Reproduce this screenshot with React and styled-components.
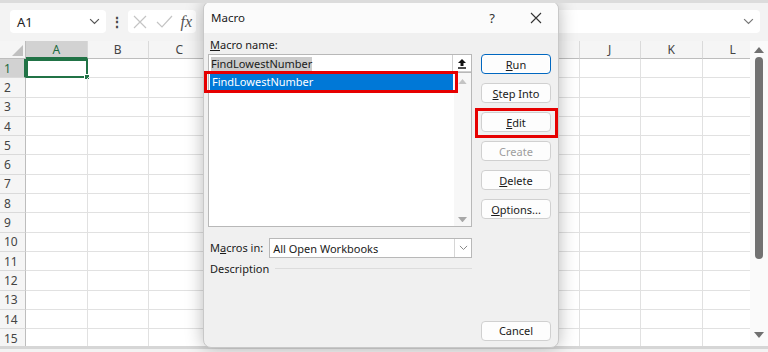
import styled, { createGlobalStyle } from 'styled-components';

const Global = createGlobalStyle`
  html, body {
    margin: 0;
    padding: 0;
    background: #e9e9e9;
  }
  * { box-sizing: border-box; }
`;

const Screen = styled.div`
  position: relative;
  width: 768px;
  height: 352px;
  overflow: hidden;
  background: #f3f3f3;
  border-top: 3px solid #dcdcdc;
  font-family: 'Noto Sans', 'Open Sans', sans-serif;
`;

const FormulaBar = styled.div`
  display: flex;
  align-items: center;
  height: 38px;
  padding: 7px 8px 8px 10px;
`;

const NameBox = styled.div`
  display: flex;
  align-items: center;
  justify-content: space-between;
  width: 96px;
  height: 23px;
  padding: 0 6px 0 7px;
  background: #fff;
  border-radius: 4px;
  font-size: 13px;
  color: #222;
`;

const Dots = styled.div`
  width: 22px;
  text-align: center;
  font-size: 14px;
  font-weight: 700;
  color: #444;
`;

const FxBox = styled.div`
  display: flex;
  align-items: center;
  justify-content: space-between;
  width: 68px;
  height: 23px;
  padding: 0 4px 0 4px;
  background: #fff;
  border-radius: 4px;
`;

const Fx = styled.span`
  font-family: 'Liberation Serif', serif;
  font-style: italic;
  font-size: 16px;
  color: #555;
`;

const FormulaInput = styled.div`
  flex: 1;
  display: flex;
  align-items: center;
  justify-content: flex-end;
  height: 23px;
  margin-left: 9px;
  padding-right: 6px;
  background: #fff;
  border-radius: 4px;
`;

const SheetArea = styled.div`
  display: flex;
  height: 308px;
  border-bottom: 3px solid #d6d6d6;
`;

const Sheet = styled.div`
  flex: 1;
  overflow: hidden;
  display: grid;
  grid-template-columns: 26px repeat(12, 61.5px);
  grid-template-rows: 18px repeat(15, 19.3px);
  background: #fff;
`;

const Cell = styled.div`
  position: relative;
  border-right: 1px solid #e1e1e1;
  border-bottom: 1px solid #e1e1e1;
  ${(p) => p.$active && `
    border: 2px solid #217346;
  `}
`;

const Handle = styled.span`
  position: absolute;
  right: -4px;
  bottom: -4px;
  width: 6px;
  height: 6px;
  background: #217346;
  border: 1px solid #fff;
`;

const Header = styled.div`
  display: flex;
  align-items: center;
  justify-content: ${(p) => (p.$row ? 'flex-start' : 'center')};
  padding-left: ${(p) => (p.$row ? '4px' : '0')};
  font-size: 12px;
  color: ${(p) => (p.$on ? '#1e6b40' : '#444')};
  background: ${(p) => (p.$on ? '#d2d2d2' : '#f5f5f5')};
  border-right: 1px solid ${(p) => (p.$row ? '#bdbdbd' : '#dadada')};
  border-bottom: 1px solid ${(p) => (p.$row ? '#dadada' : '#bdbdbd')};
  ${(p) => p.$on && p.$row && 'border-right: 2px solid #217346;'}
  ${(p) => p.$on && !p.$row && 'border-bottom: 2px solid #217346;'}
`;

const Corner = styled.div`
  display: flex;
  align-items: flex-end;
  justify-content: flex-end;
  padding: 0 2px 2px 0;
  background: #f5f5f5;
  border-right: 1px solid #bdbdbd;
  border-bottom: 1px solid #bdbdbd;
`;

const VScroll = styled.div`
  width: 18px;
  display: flex;
  flex-direction: column;
  align-items: center;
  padding: 6px 0 8px;
  background: #fafafa;
`;

const Thumb = styled.div`
  width: 8px;
  height: 202px;
  margin-top: 4px;
  border-radius: 4px;
  background: #727272;
`;

const Spacer = styled.div`
  flex: 1;
`;

/* dialog */

const Dialog = styled.div`
  position: absolute;
  left: 203px;
  top: -2px;
  width: 356px;
  height: 347px;
  display: flex;
  flex-direction: column;
  background: #f0f0f0;
  border: 1px solid #c8c8c8;
  border-radius: 8px;
  box-shadow: 0 0 18px rgba(0, 0, 0, 0.28);
  overflow: hidden;
  font-size: 11px;
  color: #1a1a1a;
`;

const TitleBar = styled.div`
  display: flex;
  align-items: center;
  height: 31px;
  padding-left: 7px;
  background: #fbfbfb;
  font-size: 11.5px;
`;

const TitleText = styled.div`
  flex: 1;
`;

const TitleBtn = styled.div`
  width: 44px;
  display: flex;
  justify-content: center;
  align-items: center;
  color: #333;
  font-size: 13px;
`;

const Body = styled.div`
  flex: 1;
  display: flex;
  gap: 9px;
  padding: 4px 7px 6px 4px;
`;

const LeftCol = styled.div`
  width: 264px;
  display: flex;
  flex-direction: column;
`;

const Label = styled.div`
  height: 17px;
  padding: 1px 0 0 2px;
  line-height: 14px;
`;

const NameInput = styled.div`
  display: flex;
  align-items: center;
  height: 18px;
  background: #fff;
  border: 1px solid #b8b8b8;
  border-bottom: none;
  padding-left: 2px;
  line-height: 14px;
`;

const SelText = styled.span`
  background: #cccccc;
`;

const UpBtn = styled.div`
  margin-left: auto;
  width: 19px;
  height: 17px;
  display: flex;
  align-items: center;
  justify-content: center;
  border-left: 1px solid #d0d0d0;
  border-bottom: 1px solid #d0d0d0;
  background: #fff;
`;

const ListBox = styled.div`
  display: flex;
  height: 155px;
  background: #fff;
  border: 1px solid #b8b8b8;
`;

const Items = styled.div`
  position: relative;
  flex: 1;
  padding: 1px 1px 0 1px;
`;

const Item = styled.div`
  height: 16px;
  line-height: 16px;
  padding-left: 2px;
  background: ${(p) => (p.$sel ? '#0078d7' : 'transparent')};
  color: ${(p) => (p.$sel ? '#fff' : '#1a1a1a')};
`;

const ListScroll = styled.div`
  width: 17px;
  display: flex;
  flex-direction: column;
  align-items: center;
  justify-content: space-between;
  padding: 6px 0 4px;
  background: #f7f7f7;
`;

const RedBox = styled.div`
  position: absolute;
  left: -5px;
  top: -2px;
  right: -4px;
  height: 22px;
  border: 3px solid #e60000;
`;

const Row = styled.div`
  display: flex;
  align-items: center;
  gap: 6px;
  margin-top: 11px;
`;

const Select = styled.div`
  flex: 1;
  display: flex;
  align-items: center;
  height: 20px;
  background: #fff;
  border: 1px solid #b8b8b8;
  padding-left: 3px;
`;

const SelectArrow = styled.div`
  margin-left: auto;
  width: 17px;
  height: 18px;
  display: flex;
  align-items: center;
  justify-content: center;
  border-left: 1px solid #d6d6d6;
`;

const DescRow = styled.div`
  display: flex;
  align-items: center;
  gap: 6px;
  margin-top: 2px;
  padding-left: 2px;
  height: 16px;
`;

const Line = styled.div`
  flex: 1;
  height: 1px;
  background: #dcdcdc;
`;

const RightCol = styled.div`
  width: 70px;
  display: flex;
  flex-direction: column;
  gap: 8.6px;
  padding-top: 17px;
`;

const Button = styled.div`
  position: relative;
  height: 20.4px;
  display: flex;
  align-items: center;
  justify-content: center;
  background: #fdfdfd;
  border: 1px solid ${(p) => (p.$primary ? '#0067c0' : '#d0d0d0')};
  border-radius: 4px;
  color: ${(p) => (p.$disabled ? '#9d9d9d' : '#1a1a1a')};
  ${(p) => p.$primary && 'box-shadow: inset 0 0 0 1px #fff;'}
  ${(p) => p.$bottom && 'margin-top: auto;'}
`;

const EditMark = styled.div`
  position: absolute;
  left: -7px;
  right: -8px;
  top: -5px;
  bottom: -7px;
  border: 3px solid #e60000;
`;

const U = styled.span`
  text-decoration: underline;
  text-underline-offset: 1px;
`;

const cols = ['A', 'B', 'C', 'D', 'E', 'F', 'G', 'H', 'I', 'J', 'K', 'L'];
const rows = Array.from({ length: 15 }, (_, i) => i + 1);

const Chevron = ({ size = 10, color = '#666' }) => (
  <svg width={size} height={size * 0.6} viewBox="0 0 10 6">
    <path d="M1 1l4 4 4-4" fill="none" stroke={color} strokeWidth="1.1" />
  </svg>
);

const Tri = ({ up, color = '#9a9a9a', w = 9 }) => (
  <svg width={w} height={w * 0.6} viewBox="0 0 10 6">
    <path d={up ? 'M0 6L5 0l5 6z' : 'M0 0l5 6 5-6z'} fill={color} />
  </svg>
);

export default function App() {
  return (
    <>
      <Global />
      <Screen>
        <FormulaBar>
          <NameBox>
            A1
            <Chevron size={11} color="#555" />
          </NameBox>
          <Dots>⋮</Dots>
          <FxBox>
            <svg width="16" height="16" viewBox="0 0 16 16">
              <path d="M2 2l12 12M14 2L2 14" stroke="#c4c4c4" strokeWidth="1.2" />
            </svg>
            <svg width="18" height="16" viewBox="0 0 18 16">
              <path d="M2 8l5 5L17 2" fill="none" stroke="#c4c4c4" strokeWidth="1.2" />
            </svg>
            <Fx>fx</Fx>
          </FxBox>
          <FormulaInput>
            <Chevron size={11} color="#777" />
          </FormulaInput>
        </FormulaBar>

        <SheetArea>
          <Sheet>
            <Corner>
              <svg width="11" height="11" viewBox="0 0 11 11">
                <path d="M11 0v11H0z" fill="#c0c0c0" />
              </svg>
            </Corner>
            {cols.map((c) => (
              <Header key={c} $on={c === 'A'}>
                {c}
              </Header>
            ))}
            {rows.map((r) => [
              <Header key={'h' + r} $row $on={r === 1}>
                {r}
              </Header>,
              ...cols.map((c) => (
                <Cell key={c + r} $active={r === 1 && c === 'A'}>
                  {r === 1 && c === 'A' && <Handle />}
                </Cell>
              )),
            ])}
          </Sheet>
          <VScroll>
            <Tri up color="#707070" w={10} />
            <Thumb />
            <Spacer />
            <Tri color="#707070" w={10} />
          </VScroll>
        </SheetArea>

        <Dialog>
          <TitleBar>
            <TitleText>Macro</TitleText>
            <TitleBtn>?</TitleBtn>
            <TitleBtn>
              <svg width="12" height="12" viewBox="0 0 12 12">
                <path d="M1 1l10 10M11 1L1 11" stroke="#333" strokeWidth="1.1" />
              </svg>
            </TitleBtn>
          </TitleBar>
          <Body>
            <LeftCol>
              <Label>
                <U>M</U>acro name:
              </Label>
              <NameInput>
                <SelText>FindLowestNumber</SelText>
                <UpBtn>
                  <svg width="10" height="11" viewBox="0 0 10 11">
                    <path d="M5 1L1 5h2.5v3h3V5H9z" fill="#111" />
                    <path d="M1 10h8" stroke="#111" strokeWidth="1.4" />
                  </svg>
                </UpBtn>
              </NameInput>
              <ListBox>
                <Items>
                  <Item $sel>FindLowestNumber</Item>
                  <RedBox />
                </Items>
                <ListScroll>
                  <Tri up color="#c4c4c4" />
                  <Tri color="#a8a8a8" />
                </ListScroll>
              </ListBox>
              <Row>
                <Label>
                  M<U>a</U>cros in:
                </Label>
                <Select>
                  All Open Workbooks
                  <SelectArrow>
                    <Chevron size={9} color="#888" />
                  </SelectArrow>
                </Select>
              </Row>
              <DescRow>
                Description
                <Line />
              </DescRow>
            </LeftCol>
            <RightCol>
              <Button $primary>
                <U>R</U>un
              </Button>
              <Button>
                <U>S</U>tep Into
              </Button>
              <Button>
                <U>E</U>dit
                <EditMark />
              </Button>
              <Button $disabled>Create</Button>
              <Button>
                <U>D</U>elete
              </Button>
              <Button>
                <U>O</U>ptions...
              </Button>
              <Button $bottom>Cancel</Button>
            </RightCol>
          </Body>
        </Dialog>
      </Screen>
    </>
  );
}
